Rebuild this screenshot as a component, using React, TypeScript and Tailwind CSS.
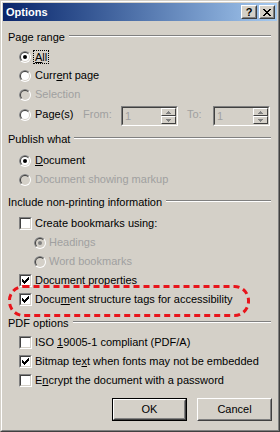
import React from "react";

const GRAY = "#a0a0a0";

function Radio({ checked = false, disabled = false }: { checked?: boolean; disabled?: boolean }) {
  return (
    <svg width="12" height="12" viewBox="0 0 12 12" className="block">
      <circle cx="6" cy="6" r="6" fill="#ffffff" />
      <path d="M1.757 10.243 A6 6 0 0 1 10.243 1.757 Z" fill="#808080" />
      <circle cx="6" cy="6" r="5" fill="#d4d0c8" />
      <path d="M2.464 9.536 A5 5 0 0 1 9.536 2.464 Z" fill="#404040" />
      <circle cx="6" cy="6" r="4" fill={disabled ? "#d4d0c8" : "#ffffff"} />
      {checked ? <circle cx="6" cy="6" r="2" fill={disabled ? "#808080" : "#000000"} /> : null}
    </svg>
  );
}

function Checkbox({ checked = false }: { checked?: boolean }) {
  return (
    <div className="w-[13px] h-[13px] border border-t-[#808080] border-l-[#808080] border-b-white border-r-white">
      <div className="w-full h-full bg-white border border-t-[#404040] border-l-[#404040] border-b-[#d4d0c8] border-r-[#d4d0c8]">
        {checked ? (
          <svg width="9" height="9" viewBox="0 0 9 9" shapeRendering="crispEdges" className="block">
            <path
              d="M7 1h1v1h-1z M6 2h2v1h-2z M1 3h1v1h-1z M5 3h3v1h-3z M1 4h2v1h-2z M4 4h3v1h-3z M1 5h5v1h-5z M2 6h3v1h-3z M3 7h1v1h-1z"
              fill="#000000"
            />
          </svg>
        ) : null}
      </div>
    </div>
  );
}

function GroupLabel({ label, className }: { label: string; className: string }) {
  return (
    <div className={`flex items-center h-[14px] pl-[5px] pr-[6px] ${className}`}>
      <span className="whitespace-nowrap">{label}</span>
      <div className="flex-1 ml-[4px] -mt-[2px] h-[2px] border-t border-t-[#808080] border-b border-b-white" />
    </div>
  );
}

function Row({ control, children, sub = false }: { control: React.ReactNode; children: React.ReactNode; sub?: boolean }) {
  return (
    <div className={`flex items-center h-[19px] whitespace-nowrap ${sub ? "pl-[31px]" : "pl-[16px]"}`}>
      <span className="w-[13px] flex items-center">{control}</span>
      <span className={sub ? "ml-[2px]" : "ml-[3px]"}>{children}</span>
    </div>
  );
}

function SpinArrow({ up }: { up: boolean }) {
  return (
    <div className="flex-1 flex items-center justify-center bg-[#d4d0c8] border border-t-white border-l-white border-b-[#404040] border-r-[#404040]">
      <svg width="5" height="3" viewBox="0 0 5 3" shapeRendering="crispEdges" className="block">
        <path d={up ? "M2 0h1v1h-1z M1 1h3v1h-3z M0 2h5v1h-5z" : "M0 0h5v1h-5z M1 1h3v1h-3z M2 2h1v1h-1z"} fill="#808080" />
      </svg>
    </div>
  );
}

function SpinBox() {
  return (
    <div className="w-[57px] h-[20px] mt-[1px] border border-t-[#808080] border-l-[#808080] border-b-white border-r-white">
      <div className="w-full h-full flex bg-[#d4d0c8] border border-t-[#404040] border-l-[#404040] border-b-[#d4d0c8] border-r-[#d4d0c8]">
        <span className="flex-1 pl-[2px] leading-[16px] text-[#a0a0a0]">1</span>
        <div className="w-[15px] flex flex-col">
          <SpinArrow up />
          <SpinArrow up={false} />
        </div>
      </div>
    </div>
  );
}

function RaisedButton({ label, isDefault = false }: { label: string; isDefault?: boolean }) {
  return (
    <div className={`w-[75px] h-[23px] ${isDefault ? "border border-black" : ""}`}>
      <div className="w-full h-full border border-t-white border-l-white border-b-[#404040] border-r-[#404040]">
        <div className="w-full h-full flex items-center justify-center border border-t-[#d4d0c8] border-l-[#d4d0c8] border-b-[#808080] border-r-[#808080]">
          {label}
        </div>
      </div>
    </div>
  );
}

function TitleButton({ children }: { children: React.ReactNode }) {
  return (
    <div className="w-[16px] h-[14px] bg-[#d4d0c8] border border-t-white border-l-white border-b-[#404040] border-r-[#404040]">
      <div className="w-full h-full flex items-center justify-center border border-t-[#d4d0c8] border-l-[#d4d0c8] border-b-[#808080] border-r-[#808080]">
        {children}
      </div>
    </div>
  );
}

export default function App() {
  return (
    <div className="relative w-[280px] h-[432px] bg-[#d4d0c8] text-[11px] leading-[13px] text-black font-['Liberation_Sans',Arial,sans-serif] border border-t-[#d4d0c8] border-l-[#d4d0c8] border-b-[#404040] border-r-[#404040]">
      <div className="h-full flex flex-col p-px border border-t-white border-l-white border-b-[#808080] border-r-[#808080]">
        {/* title bar */}
        <div className="h-[18px] flex items-center justify-between pl-[3px] pr-[2px] bg-gradient-to-r from-[#0a246a] to-[#a6caf0]">
          <span className="font-bold text-white">Options</span>
          <div className="flex gap-[2px]">
            <TitleButton>
              <span className="font-bold text-[11px] leading-[10px]">?</span>
            </TitleButton>
            <TitleButton>
              <svg width="8" height="7" viewBox="0 0 8 7" shapeRendering="crispEdges" className="block">
                <path
                  d="M0 0h2v1h-2z M6 0h2v1h-2z M1 1h2v1h-2z M5 1h2v1h-2z M2 2h4v1h-4z M3 3h2v1h-2z M2 4h4v1h-4z M1 5h2v1h-2z M5 5h2v1h-2z M0 6h2v1h-2z M6 6h2v1h-2z"
                  fill="#000000"
                />
              </svg>
            </TitleButton>
          </div>
        </div>

        <GroupLabel label="Page range" className="mt-[9px]" />
        <div className="mt-[3px]">
          <Row control={<Radio checked />}>
            <span className="-ml-[2px] px-px border border-dotted border-black leading-[12px] inline-block">
              <u>A</u>ll
            </span>
          </Row>
          <Row control={<Radio />}>
            Curr<u>e</u>nt page
          </Row>
          <Row control={<Radio disabled />}>
            <span className="text-[#a0a0a0]">Selection</span>
          </Row>
        </div>
        <div className="mt-[1px] flex items-start h-[21px] pl-[16px] whitespace-nowrap">
          <div className="flex items-center h-[19px]">
            <span className="w-[13px] flex items-center">
              <Radio />
            </span>
            <span className="ml-[3px] w-[48px]">Page(s)</span>
            <span className="w-[38px]" style={{ color: GRAY }}>
              From:
            </span>
          </div>
          <SpinBox />
          <div className="flex items-center h-[19px] ml-[9px]">
            <span className="w-[26px] text-[#a0a0a0]">To:</span>
          </div>
          <SpinBox />
        </div>

        <GroupLabel label="Publish what" className="mt-[6px]" />
        <div className="mt-[5px]">
          <Row control={<Radio checked />}>
            <u>D</u>ocument
          </Row>
          <Row control={<Radio disabled />}>
            <span className="text-[#a0a0a0]">Document showing markup</span>
          </Row>
        </div>

        <GroupLabel label="Include non-printing information" className="mt-[6px]" />
        <div className="mt-[5px]">
          <Row control={<Checkbox />}>Create bookmarks using:</Row>
          <Row sub control={<Radio checked disabled />}>
            <span className="text-[#a0a0a0]">Headings</span>
          </Row>
          <Row sub control={<Radio disabled />}>
            <span className="text-[#a0a0a0]">Word bookmarks</span>
          </Row>
          <Row control={<Checkbox checked />}>Document properties</Row>
          <Row control={<Checkbox checked />}>
            Docu<u>m</u>ent structure tags for accessibility
          </Row>
        </div>

        <GroupLabel label="PDF options" className="mt-[7px]" />
        <div className="mt-[3px]">
          <Row control={<Checkbox />}>
            ISO <u>1</u>9005-1 compliant (PDF/A)
          </Row>
          <Row control={<Checkbox checked />}>
            Bitmap te<u>x</u>t when fonts may not be embedded
          </Row>
          <Row control={<Checkbox />}>
            E<u>n</u>crypt the document with a password
          </Row>
        </div>

        <div className="mt-[8px] flex justify-end gap-[10px] pr-[5px]">
          <RaisedButton label="OK" isDefault />
          <RaisedButton label="Cancel" />
        </div>
      </div>

      {/* red dashed annotation */}
      <svg className="absolute left-[7px] top-[284px]" width="242" height="32" viewBox="0 0 242 32">
        <rect x="1.5" y="1.5" width="239" height="29" rx="14" ry="14" fill="none" stroke="#e8141b" strokeWidth="3" strokeDasharray="6 4" />
      </svg>
    </div>
  );
}
